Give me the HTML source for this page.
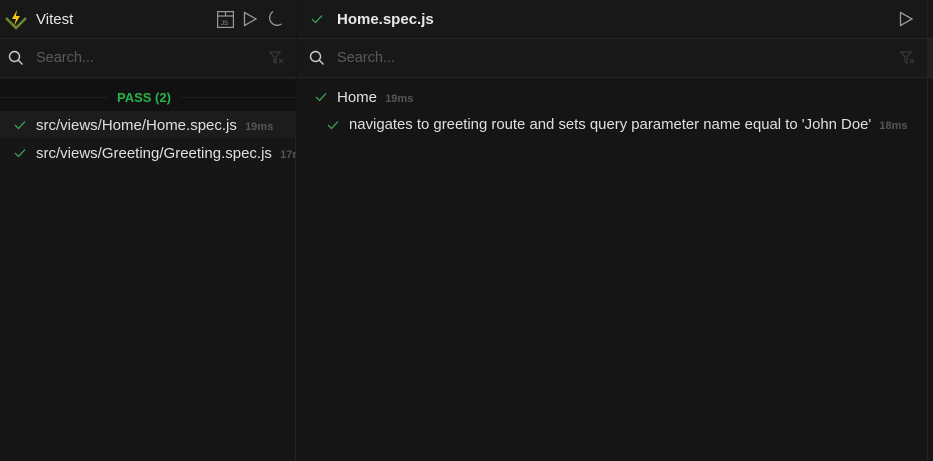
<!DOCTYPE html>
<html><head><style>
*{margin:0;padding:0;box-sizing:border-box}
body{width:933px;height:461px;background:#151515;font-family:"Liberation Sans",sans-serif;color:#ddd;overflow:hidden;position:relative}
.abs{position:absolute}
.left{left:0;top:0;width:296px;height:461px;background:#161616;border-right:1px solid #232323}
.hdr{height:39px;border-bottom:1px solid #262626;background:#181818}
.srch{height:39px;border-bottom:1px solid #262626;background:#181818}
.ph{color:#5a5a5a;font-size:14.5px}
.chk{stroke:#3fae5a;stroke-width:1.2;fill:none}
.ms{color:#555;font-size:11px;font-weight:bold}
</style></head><body>
<div class="abs left">
  <div class="hdr abs" style="left:0;top:0;width:296px"></div>
  <div class="srch abs" style="left:0;top:39px;width:296px"></div>
  <svg class="abs" style="left:5px;top:7px" width="22" height="24" viewBox="0 0 22 24">
    <path d="M1 11 L11 21 L21 11" stroke="#6d8a2a" stroke-width="2.5" fill="none"/>
    <path d="M12 3 L7 12 L11 12 L9 19 L15 9 L11 9 Z" fill="#f5c518"/>
  </svg>
  <div class="abs" style="left:36px;top:11px;font-size:15px;color:#e6e6e6">Vitest</div>
  <svg class="abs" style="left:217px;top:11px" width="17" height="17" viewBox="0 0 17 17" fill="none" stroke="#999" stroke-width="1.2"><rect x="0.6" y="0.6" width="15.8" height="15.8"/><line x1="0.6" y1="5" x2="16.4" y2="5"/><line x1="8.5" y1="0.6" x2="8.5" y2="5"/><text x="4" y="14" font-size="6" fill="#999" stroke="none" font-family="Liberation Sans">JS</text></svg>
  <svg class="abs" style="left:243px;top:11px" width="15" height="16" viewBox="0 0 15 16" fill="none" stroke="#999" stroke-width="1.3"><path d="M1.5 1.5 L13 8 L1.5 14.5 Z"/></svg>
  <svg class="abs" style="left:267px;top:10px" width="16" height="18" viewBox="0 0 16 18" fill="none" stroke="#999" stroke-width="1.3"><path d="M6 1.5 A7.5 7.5 0 1 0 14.5 14 A7 7 0 0 1 6 1.5 Z"/></svg>
  <svg class="abs" style="left:8px;top:50px" width="16" height="16" viewBox="0 0 16 16" fill="none" stroke="#ccc" stroke-width="1.4"><circle cx="6.5" cy="6.5" r="5"/><line x1="10.3" y1="10.3" x2="14.5" y2="14.5"/></svg>
  <div class="abs ph" style="left:36px;top:50px">Search...</div>
  <svg class="abs" style="left:269px;top:51px" width="16" height="14" viewBox="0 0 16 14" fill="none" stroke="#3a3a3a" stroke-width="1.2"><path d="M1 1 H11 L7 6 V12 L5 11 V6 Z"/><path d="M10 8 L14 12 M14 8 L10 12"/></svg>
  <div class="abs" style="left:0;top:80px;width:296px;height:31px;background:#111"></div>
  <div class="abs" style="left:0;top:97px;width:296px;height:1px;background:#1e1e1e"></div>
  <div class="abs" style="left:109px;top:90px;padding:0 8px;background:#111;color:#27b34a;font-weight:bold;font-size:13px">PASS (2)</div>
  <div class="abs" style="left:0;top:111px;width:296px;height:27px;background:#1c1c1c;border-radius:0 4px 4px 0"></div>
  <svg class="abs" style="left:14px;top:120px" width="12" height="10"><path class="chk" d="M1 5 L4.5 8.5 L11 1.5"/></svg>
  <div class="abs" style="left:36px;top:117px;font-size:15px;color:#e0e0e0">src/views/Home/Home.spec.js <span class="ms" style="margin-left:4px">19ms</span></div>
  <svg class="abs" style="left:14px;top:148px" width="12" height="10"><path class="chk" d="M1 5 L4.5 8.5 L11 1.5"/></svg>
  <div class="abs" style="left:36px;top:145px;font-size:15px;color:#e0e0e0;white-space:nowrap;width:260px;overflow:hidden">src/views/Greeting/Greeting.spec.js <span class="ms" style="margin-left:4px">17ms</span></div>
</div>
<div class="abs hdr" style="left:297px;top:0;width:636px"></div>
<div class="abs srch" style="left:297px;top:39px;width:636px"></div>
<svg class="abs" style="left:311px;top:14px" width="12" height="10"><path class="chk" d="M1 5 L4.5 8.5 L11 1.5"/></svg>
<div class="abs" style="left:337px;top:11px;font-size:15px;font-weight:bold;color:#e8e8e8">Home.spec.js</div>
<svg class="abs" style="left:899px;top:11px" width="15" height="16" viewBox="0 0 15 16" fill="none" stroke="#999" stroke-width="1.3"><path d="M1.5 1.5 L13 8 L1.5 14.5 Z"/></svg>
<svg class="abs" style="left:309px;top:50px" width="16" height="16" viewBox="0 0 16 16" fill="none" stroke="#ccc" stroke-width="1.4"><circle cx="6.5" cy="6.5" r="5"/><line x1="10.3" y1="10.3" x2="14.5" y2="14.5"/></svg>
<div class="abs ph" style="left:337px;top:50px">Search...</div>
<svg class="abs" style="left:900px;top:51px" width="16" height="14" viewBox="0 0 16 14" fill="none" stroke="#3a3a3a" stroke-width="1.2"><path d="M1 1 H11 L7 6 V12 L5 11 V6 Z"/><path d="M10 8 L14 12 M14 8 L10 12"/></svg>
<div class="abs" style="left:927px;top:0;width:1px;height:461px;background:#222"></div>
<div class="abs" style="left:928px;top:39px;width:5px;height:40px;background:#222"></div>
<svg class="abs" style="left:315px;top:92px" width="12" height="10"><path class="chk" d="M1 5 L4.5 8.5 L11 1.5"/></svg>
<div class="abs" style="left:337px;top:89px;font-size:15px;color:#e0e0e0">Home <span class="ms" style="margin-left:4px">19ms</span></div>
<svg class="abs" style="left:327px;top:120px" width="12" height="10"><path class="chk" d="M1 5 L4.5 8.5 L11 1.5"/></svg>
<div class="abs" style="left:349px;top:117px;font-size:14.9px;color:#e0e0e0;white-space:nowrap">navigates to greeting route and sets query parameter name equal to 'John Doe' <span class="ms" style="margin-left:4px">18ms</span></div>
</body></html>
